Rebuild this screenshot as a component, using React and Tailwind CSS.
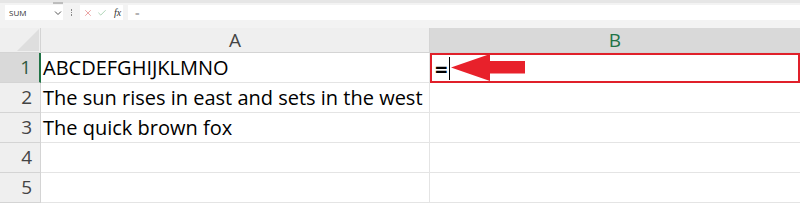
import { X, Check } from 'lucide-react'

const rows = [
  { n: 1, a: 'ABCDEFGHIJKLMNO' },
  { n: 2, a: 'The sun rises in east and sets in the west' },
  { n: 3, a: 'The quick brown fox' },
  { n: 4, a: '' },
  { n: 5, a: '' },
]

function LeftArrow() {
  return (
    <svg width="76" height="28" viewBox="0 0 76 28" className="absolute left-[19px] top-[-1px]">
      <polygon points="0,13.5 39,0 39,7 74,7 74,19.5 39,19.5 39,27" fill="#e8212b" />
    </svg>
  )
}

export default function App() {
  return (
    <div className="w-[800px] h-[206px] overflow-hidden bg-white" style={{ fontFamily: '"Open Sans", "Noto Sans", sans-serif' }}>
      {/* Formula bar */}
      <div className="h-[28px] bg-[#f3f3f3] border-t-[3px] border-[#e6e6e6] pt-[2px] flex items-start">
        <div className="relative ml-[5px] w-[58px] h-[15px] bg-white flex items-center justify-between pl-[4px] pr-[1px]">
          <span className="text-[8px] text-[#333] leading-none">SUM</span>
          <svg width="8" height="6" viewBox="0 0 8 6">
            <path d="M1 1.5 L4 4.5 L7 1.5" fill="none" stroke="#555" strokeWidth="1" />
          </svg>
          <div className="absolute right-0 top-[-3px] w-[10px] h-[2px] bg-[#bdbdbd]" />
        </div>
        <div className="w-[17px] h-[15px] flex flex-col items-center justify-center gap-[1px]">
          <span className="w-[1.5px] h-[1.5px] bg-[#888]" />
          <span className="w-[1.5px] h-[1.5px] bg-[#888]" />
          <span className="w-[1.5px] h-[1.5px] bg-[#888]" />
        </div>
        <div className="w-[43px] h-[15px] bg-white flex items-center pl-[3px] gap-[4px]">
          <X className="w-[10px] h-[10px] text-[#e07070]" strokeWidth={1.5} />
          <Check className="w-[10px] h-[10px] text-[#7dbb8a]" strokeWidth={1.5} />
          <span className="ml-[3px] text-[10px] italic text-[#333] leading-none" style={{ fontFamily: '"Liberation Serif", serif' }}>fx</span>
        </div>
        <div className="ml-[5px] flex-1 h-[15px] bg-white flex items-center pl-[7px]">
          <span className="text-[8px] text-[#777] leading-none">=</span>
        </div>
      </div>

      {/* Grid */}
      <div className="grid grid-cols-[41px_389px_370px]">
        {/* header row */}
        <div className="relative h-[25px] bg-[#efefef] border-r border-b border-[#d4d4d4]">
          <svg width="22" height="22" viewBox="0 0 22 22" className="absolute right-[1px] bottom-[1px]">
            <polygon points="22,0 22,22 0,22" fill="#dedede" />
          </svg>
        </div>
        <div className="h-[25px] bg-[#efefef] border-r border-b border-[#d4d4d4] flex items-center justify-center text-[19px] text-[#444]">A</div>
        <div className="h-[25px] bg-[#d9d9d9] border-b border-[#d4d4d4] flex items-center justify-center text-[19px] text-[#217346]">B</div>

        {rows.map((r) => (
          <Row key={r.n} r={r} />
        ))}
      </div>
    </div>
  )
}

function Row({ r }) {
  const sel = r.n === 1
  return (
    <>
      <div
        className={
          sel
            ? 'h-[30px] bg-[#d9d9d9] border-r-2 border-[#217346] border-b border-b-[#d4d4d4] flex items-center justify-end pr-[8px] text-[19px] text-[#2f5a3e]'
            : 'h-[30px] bg-[#efefef] border-r border-b border-[#d4d4d4] flex items-center justify-end pr-[8px] text-[19px] text-[#444]'
        }
      >
        {r.n}
      </div>
      <div className="h-[30px] border-r border-b border-[#e4e4e4] flex items-center pl-[2px] text-[20px] text-black whitespace-nowrap overflow-hidden">
        {r.a}
      </div>
      {sel ? (
        <div className="relative h-[30px] border-2 border-[#e0202a] flex items-center pl-[3px] text-[22px] text-black">
          <span className="font-bold leading-none">=</span>
          <span className="ml-[1px] w-px h-[23px] bg-black" />
          <LeftArrow />
        </div>
      ) : (
        <div className="h-[30px] border-b border-[#e4e4e4]" />
      )}
    </>
  )
}
